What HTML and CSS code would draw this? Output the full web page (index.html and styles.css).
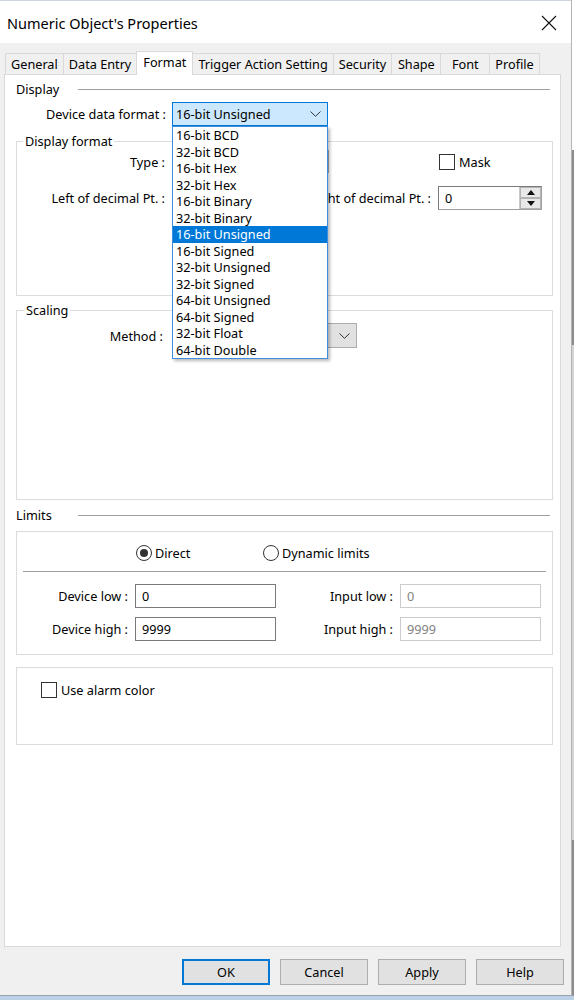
FILE: index.html
```html
<!DOCTYPE html>
<html>
<head>
<meta charset="utf-8">
<title>Numeric Object's Properties</title>
<link rel="stylesheet" href="styles.css">
</head>
<body>
<div class="screen">
  <div class="dialog">
    <div class="titlebar">
      <span class="title">Numeric Object's Properties</span>
      <svg class="close" width="16" height="16" viewBox="0 0 16 16"><path d="M1 1 L15 15 M15 1 L1 15" stroke="#111" stroke-width="1.1" fill="none"/></svg>
    </div>
    <div class="tabs">
      <div class="tab">General</div>
      <div class="tab">Data Entry</div>
      <div class="tab active">Format</div>
      <div class="tab">Trigger Action Setting</div>
      <div class="tab">Security</div>
      <div class="tab">Shape</div>
      <div class="tab">Font</div>
      <div class="tab">Profile</div>
    </div>
    <div class="panel">
      <div class="sect-head"><span class="sect-label">Display</span><span class="rule"></span></div>
      <div class="row dev-row">
        <span class="lbl lbl-dev">Device data format :</span>
        <div class="combo-wrap">
          <div class="combo combo-open"><span class="combo-text">16-bit Unsigned</span><svg class="chev" width="11" height="6" viewBox="0 0 11 6"><path d="M0.5 0.5 L5.5 5.3 L10.5 0.5" fill="none" stroke="#333" stroke-width="1"/></svg></div>
          <ul class="dropdown">
            <li>16-bit BCD</li>
            <li>32-bit BCD</li>
            <li>16-bit Hex</li>
            <li>32-bit Hex</li>
            <li>16-bit Binary</li>
            <li>32-bit Binary</li>
            <li class="sel">16-bit Unsigned</li>
            <li>16-bit Signed</li>
            <li>32-bit Unsigned</li>
            <li>32-bit Signed</li>
            <li>64-bit Unsigned</li>
            <li>64-bit Signed</li>
            <li>32-bit Float</li>
            <li>64-bit Double</li>
          </ul>
        </div>
      </div>

      <div class="group g-format">
        <div class="group-title">Display format</div>
        <div class="row r-type">
          <span class="lbl lbl-g">Type :</span>
          <div class="combo combo-type"></div>
          <label class="check mask"><span class="box"></span>Mask</label>
        </div>
        <div class="row r-dec">
          <span class="lbl lbl-g">Left of decimal Pt. :</span>
          <div class="spin spin-left"></div>
          <span class="lbl lbl-right">Right of decimal Pt. :</span>
          <div class="spin spin-right">
            <span class="spin-val">0</span>
            <span class="spin-btns">
              <span class="spin-btn"><svg width="8" height="5" viewBox="0 0 8 5"><path d="M0 5 L4 0 L8 5 Z" fill="#111"/></svg></span>
              <span class="spin-btn"><svg width="8" height="5" viewBox="0 0 8 5"><path d="M0 0 L4 5 L8 0 Z" fill="#111"/></svg></span>
            </span>
          </div>
        </div>
      </div>

      <div class="group g-scaling">
        <div class="group-title title-scaling">Scaling</div>
        <div class="row r-method">
          <span class="lbl lbl-method">Method :</span>
          <div class="combo combo-method"><span class="combo-text"></span><svg class="chev" width="11" height="6" viewBox="0 0 11 6"><path d="M0.5 0.5 L5.5 5.3 L10.5 0.5" fill="none" stroke="#333" stroke-width="1"/></svg></div>
        </div>
      </div>

      <div class="sect-head limits-head"><span class="sect-label">Limits</span><span class="rule"></span></div>

      <div class="group g-limits">
        <div class="row r-radios">
          <label class="radio r-direct"><span class="circle"><span class="dot"></span></span>Direct</label>
          <label class="radio"><span class="circle"></span>Dynamic limits</label>
        </div>
        <div class="sep"></div>
        <div class="row r-limit r-first">
          <span class="lbl lbl-lim">Device low :</span>
          <div class="field">0</div>
          <span class="lbl lbl-lim2">Input low :</span>
          <div class="field disabled">0</div>
        </div>
        <div class="row r-limit r-second">
          <span class="lbl lbl-lim">Device high :</span>
          <div class="field">9999</div>
          <span class="lbl lbl-lim2">Input high :</span>
          <div class="field disabled">9999</div>
        </div>
      </div>

      <div class="group g-alarm">
        <div class="row r-alarm">
          <label class="check"><span class="box"></span>Use alarm color</label>
        </div>
      </div>
    </div>
    <div class="buttons">
      <button class="btn default">OK</button>
      <button class="btn">Cancel</button>
      <button class="btn">Apply</button>
      <button class="btn">Help</button>
    </div>
  </div>
  <div class="edge"></div>
</div>
<div class="bottom-edge"></div>
</body>
</html>
```

FILE: styles.css
```css
* { box-sizing: border-box; }
html, body { margin: 0; padding: 0; }
body {
  width: 574px;
  height: 1000px;
  overflow: hidden;
  background: #f0f0f0;
  font-family: "Noto Sans", "Open Sans", sans-serif;
  font-size: 12.7px;
  line-height: 16px;
  color: #000;
}
.screen { display: flex; height: 995px; }
.dialog {
  width: 571px;
  height: 995px;
  background: #f0f0f0;
  display: flex;
  flex-direction: column;
}
.edge {
  width: 3px;
  border-left: 1px solid #b4b4b4;
  background: linear-gradient(#ffffff 0, #ffffff 150px, #8c8c8c 150px, #8c8c8c 345px, #d4d4d4 345px, #d4d4d4 840px, #8c8c8c 840px);
}
.bottom-edge {
  height: 5px;
  border-top: 1px solid #9aa3ad;
  background: #bcd1e8;
}

/* title bar */
.titlebar {
  height: 43px;
  background: #fff;
  border-top: 1px solid #cfd6de;
  display: flex;
  align-items: center;
  justify-content: space-between;
  padding: 1px 14px 0 7px;
}
.title { font-size: 14.5px; color: #000; }
.close { display: block; }

/* tabs */
.tabs {
  margin-top: 9px;
  height: 22px;
  padding-left: 5px;
  display: flex;
  align-items: flex-end;
  position: relative;
  z-index: 1;
}
.tab {
  height: 21px;
  padding: 0 5px;
  min-width: 50px;
  text-align: center;
  border: 1px solid #d9d9d9;
  border-bottom: none;
  background: #f0f0f0;
  line-height: 20px;
  white-space: nowrap;
  margin-left: -1px;
}
.tab:first-child { margin-left: 0; }
.tab.active {
  height: 24px;
  margin-bottom: -1px;
  background: #fff;
  line-height: 20px;
  padding: 0 6px;
}

/* panel */
.panel {
  margin-left: 4px;
  width: 557px;
  height: 873px;
  background: #fff;
  border: 1px solid #d9d9d9;
}
.sect-head {
  margin-top: 5px;
  height: 18px;
  padding-left: 11px;
  display: flex;
  align-items: center;
}
.sect-label { width: 62px; }
.rule {
  flex: 1;
  height: 1px;
  background: #a0a0a0;
  margin-right: 10px;
}
.limits-head { margin-top: 6px; }

.row { display: flex; align-items: center; }
.lbl { white-space: nowrap; text-align: right; }
.dev-row { margin-top: 4px; height: 24px; }
.lbl-dev { width: 161px; margin-right: 6px; }

/* combobox */
.combo-wrap { position: relative; }
.combo {
  height: 24px;
  border: 1px solid #adadad;
  background: #e1e1e1;
  display: flex;
  align-items: center;
  justify-content: space-between;
  padding: 0 6px 0 3px;
}
.combo-open {
  width: 156px;
  background: #cce8ff;
  border-color: #0078d7;
}
.combo-type { width: 157px; height: 23px; }
.combo-method { width: 185px; height: 25px; }
.chev { display: block; }

.dropdown {
  position: absolute;
  top: 100%;
  left: 0;
  width: 156px;
  margin: 0;
  padding: 0;
  list-style: none;
  background: #fff;
  border: 1px solid #3d8ee0;
  box-shadow: 2px 2px 3px rgba(0, 0, 0, 0.28);
  z-index: 10;
}
.dropdown li {
  height: 16.5px;
  line-height: 16.5px;
  padding-left: 3px;
  white-space: nowrap;
}
.dropdown li.sel { background: #0078d7; color: #fff; }

/* group boxes */
.group {
  border: 1px solid #dcdcdc;
  margin: 0 7px 0 11px;
}
.group-title {
  width: fit-content;
  margin: -9px 0 0 6px;
  padding: 0 2px;
  background: #fff;
  height: 16px;
  line-height: 16px;
}
.title-scaling { margin-left: 7px; }
.g-format { margin-top: 15px; height: 155px; }
.r-type { margin-top: 1px; height: 23px; }
.lbl-g { width: 148px; margin-right: 7px; }
.mask { margin-left: 110px; }
.r-dec { margin-top: 13px; height: 24px; }
.lbl-right { width: 156px; margin-right: 7px; }

/* checkbox */
.check { display: flex; align-items: center; }
.box {
  width: 16px;
  height: 16px;
  border: 1px solid #333;
  background: #fff;
  margin-right: 4px;
}

/* spinner */
.spin {
  height: 24px;
  border: 1px solid #a0a0a0;
  border-top-color: #7a7a7a;
  border-left-color: #7a7a7a;
  display: flex;
  align-items: center;
  background: #fff;
}
.spin-left { width: 103px; }
.spin-right { width: 104px; justify-content: space-between; }
.spin-val { padding-left: 6px; }
.spin-btns {
  width: 22px;
  height: 22px;
  display: flex;
  flex-direction: column;
  background: #e6e6e6;
  border-left: 1px solid #c8c8c8;
}
.spin-btn {
  flex: 1;
  display: flex;
  align-items: center;
  justify-content: center;
  border: 1px solid #b4b4b4;
  background: #e8e8e8;
}
.spin-btn svg { display: block; }

/* scaling */
.g-scaling { margin-top: 14px; height: 190px; }
.r-method { margin-top: 5px; height: 25px; }
.lbl-method { width: 146px; margin-right: 9px; }

/* limits */
.g-limits { margin-top: 7px; height: 124px; }
.r-radios { margin-top: 11px; height: 20px; padding-left: 119px; }
.radio { display: flex; align-items: center; }
.r-direct { width: 127px; }
.circle {
  width: 16px;
  height: 16px;
  border: 1px solid #333;
  border-radius: 50%;
  margin-right: 3px;
  display: flex;
  align-items: center;
  justify-content: center;
}
.dot {
  width: 8px;
  height: 8px;
  border-radius: 50%;
  background: #333;
}
.sep {
  margin: 8px 6px 0 6px;
  height: 1px;
  background: #a0a0a0;
}
.r-limit { height: 24px; }
.r-first { margin-top: 12px; }
.r-second { margin-top: 9px; }
.lbl-lim { width: 111px; margin-right: 7px; }
.lbl-lim2 { width: 117px; margin-right: 7px; }
.field {
  width: 141px;
  height: 24px;
  border: 1px solid #7a7a7a;
  padding-left: 6px;
  line-height: 22px;
  background: #fff;
}
.field.disabled {
  border-color: #cccccc;
  color: #838383;
}

/* alarm */
.g-alarm { margin-top: 12px; height: 78px; }
.r-alarm { margin-top: 12px; height: 20px; padding-left: 24px; }

/* buttons */
.buttons {
  margin-top: 12px;
  display: flex;
  justify-content: flex-end;
  gap: 10px;
  padding-right: 7px;
}
.btn {
  width: 88px;
  height: 26px;
  border: 1px solid #adadad;
  background: #e1e1e1;
  font-family: "Noto Sans", "Open Sans", sans-serif;
  font-size: 12.7px;
  color: #000;
  padding: 0;
}
.btn.default { border: 2px solid #0078d7; }
```
